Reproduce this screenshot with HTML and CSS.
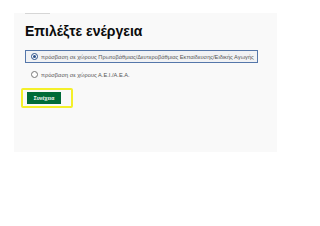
FILE: index.html
```html
<!DOCTYPE html>
<html lang="el">
<head>
  <meta charset="UTF-8" />
  <meta name="viewport" content="width=device-width,initial-scale=1" />
  <title>Επιλέξτε ενέργεια</title>
  <link rel="stylesheet" href="styles.css">
</head>
<body>
  <main class="panel">
    <div class="top-rule"></div>
    <h1>Επιλέξτε ενέργεια</h1>

    <form class="choices">
      <label class="choice selected">
        <span class="radio checked"></span>
        <span>πρόσβαση σε χώρους Πρωτοβάθμιας/Δευτεροβάθμιας Εκπαίδευσης/Ειδικής Αγωγής</span>
      </label>
      <label class="choice">
        <span class="radio"></span>
        <span>πρόσβαση σε χώρους Α.Ε.Ι./Α.Ε.Α.</span>
      </label>

      <div class="focus-ring">
        <button type="button" class="btn-next">Συνέχεια</button>
      </div>
    </form>
  </main>
</body>
</html>
```

FILE: styles.css
```css
body {
  margin: 0;
  background: #fff;
  font-family: 'Liberation Sans', Arial, sans-serif;
  color: #0b0c0c;
}

.panel {
  margin: 13px 0 0 14px;
  width: 252px;
  height: 139px;
  padding: 0 0 0 11px;
  background: #f9f9f9;
}
.top-rule {
  width: 25px;
  height: 1px;
  background: #d6d6d6;
}
.panel h1 {
  margin: 8px 0 0;
  font-size: 14px;
  line-height: 18px;
  font-weight: 700;
}

.choices {
  margin-top: 10px;
  display: flex;
  flex-direction: column;
  align-items: flex-start;
}
.choice {
  display: flex;
  align-items: center;
  gap: 3px;
  width: 224px;
  height: 11px;
  padding: 0 2px 0 5px;
  font-size: 5.7px;
  color: #555;
  border: 1px solid transparent;
}
.choice.selected {
  border-color: #5577aa;
  background: #f1f2f4;
}
.choice + .choice {
  margin-top: 5px;
}
.radio {
  flex: none;
  width: 5px;
  height: 5px;
  border: 1px solid #777;
  border-radius: 50%;
  background: #fff;
  display: flex;
  align-items: center;
  justify-content: center;
}
.radio.checked {
  border-color: #2a4f88;
}
.radio.checked::after {
  content: "";
  width: 3px;
  height: 3px;
  border-radius: 50%;
  background: #2a4f88;
}

.focus-ring {
  margin: 7px 0 0 -4px;
  width: 44px;
  padding: 2px;
  border: 2px solid #f4f02a;
  border-radius: 2px;
}
.btn-next {
  display: block;
  margin: 0 0 0 2px;
  width: 34px;
  height: 12px;
  padding: 0;
  border: none;
  background: #006b38;
  color: #fff;
  font-family: inherit;
  font-size: 5px;
  font-weight: 700;
}
```
